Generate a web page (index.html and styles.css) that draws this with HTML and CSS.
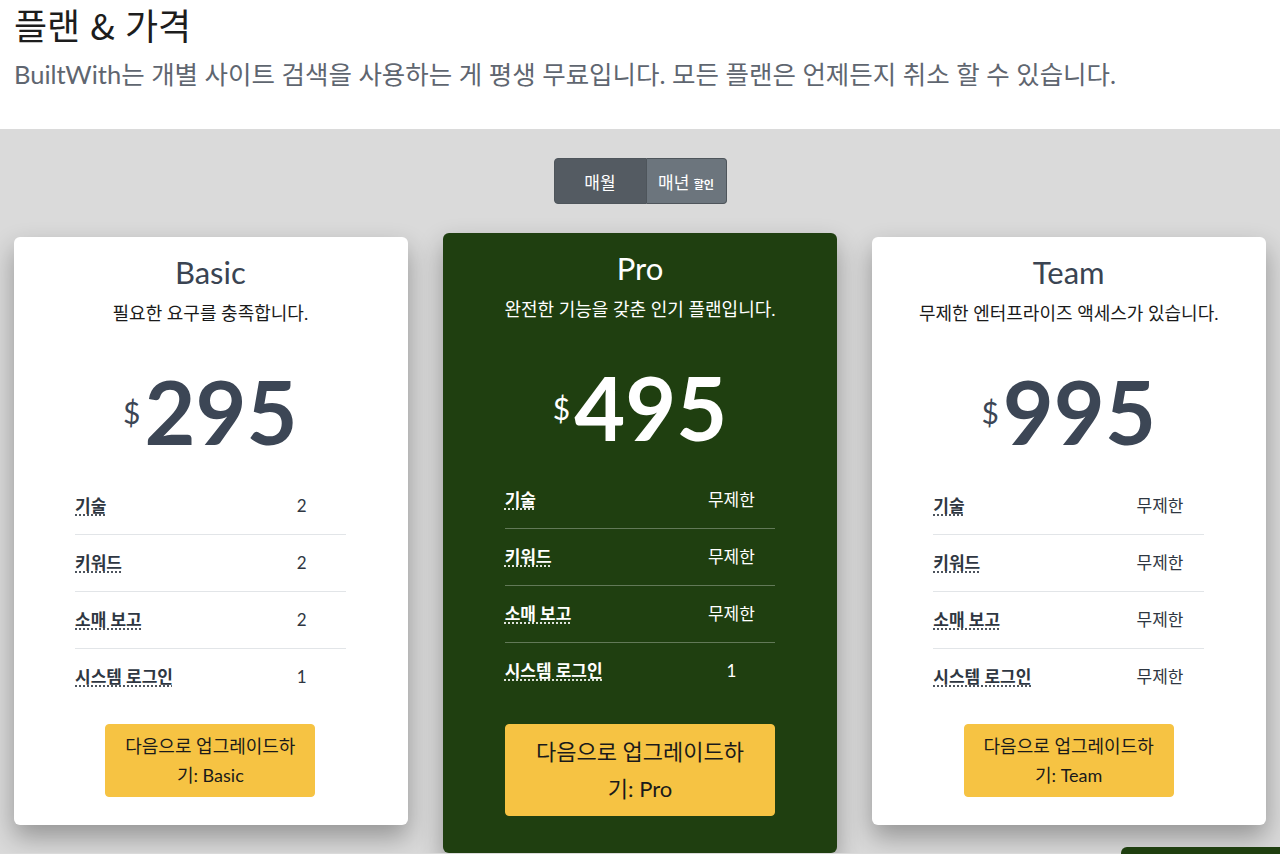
FILE: index.html
```html
<!DOCTYPE html>
<html lang="ko">
<head>
    <meta charset="UTF-8">
    <meta name="viewport" content="width=device-width, initial-scale=1.0">
    <title>플랜 &amp; 가격</title>
    <link rel="stylesheet" href="styles.css">
</head>
<body>

    <div class="page-header">
        <h1>플랜 &amp; 가격</h1>
        <p class="lead">BuiltWith는 개별 사이트 검색을 사용하는 게 평생 무료입니다. 모든 플랜은 언제든지 취소 할 수 있습니다.</p>
    </div>

    <div class="pricing">
        <div class="billing-toggle">
            <button class="toggle-btn active">매월</button>
            <button class="toggle-btn">매년 <small>할인</small></button>
        </div>

        <div class="plans">
            <!-- Basic -->
            <div class="plan-card">
                <h2 class="plan-name">Basic</h2>
                <p class="plan-desc">필요한 요구를 충족합니다.</p>
                <div class="plan-price"><span class="currency">$</span>295</div>
                <ul class="feature-list">
                    <li><abbr>기술</abbr><span>2</span></li>
                    <li><abbr>키워드</abbr><span>2</span></li>
                    <li><abbr>소매 보고</abbr><span>2</span></li>
                    <li><abbr>시스템 로그인</abbr><span>1</span></li>
                </ul>
                <button class="upgrade-btn">다음으로 업그레이드하<br>기: Basic</button>
            </div>

            <!-- Pro -->
            <div class="plan-card featured">
                <h2 class="plan-name">Pro</h2>
                <p class="plan-desc">완전한 기능을 갖춘 인기 플랜입니다.</p>
                <div class="plan-price"><span class="currency">$</span>495</div>
                <ul class="feature-list">
                    <li><abbr>기술</abbr><span>무제한</span></li>
                    <li><abbr>키워드</abbr><span>무제한</span></li>
                    <li><abbr>소매 보고</abbr><span>무제한</span></li>
                    <li><abbr>시스템 로그인</abbr><span>1</span></li>
                </ul>
                <button class="upgrade-btn">다음으로 업그레이드하<br>기: Pro</button>
            </div>

            <!-- Team -->
            <div class="plan-card">
                <h2 class="plan-name">Team</h2>
                <p class="plan-desc">무제한 엔터프라이즈 액세스가 있습니다.</p>
                <div class="plan-price"><span class="currency">$</span>995</div>
                <ul class="feature-list">
                    <li><abbr>기술</abbr><span>무제한</span></li>
                    <li><abbr>키워드</abbr><span>무제한</span></li>
                    <li><abbr>소매 보고</abbr><span>무제한</span></li>
                    <li><abbr>시스템 로그인</abbr><span>무제한</span></li>
                </ul>
                <button class="upgrade-btn">다음으로 업그레이드하<br>기: Team</button>
            </div>
        </div>
    </div>

    <div class="chat-tab"></div>

</body>
</html>
```

FILE: styles.css
```css
body {
    font-family: 'Lato', 'Noto Sans CJK KR', sans-serif;
    margin: 0;
    background-color: #dadada;
    color: #212529;
    overflow: hidden;
}

.page-header {
    background-color: #fff;
    height: 129px;
    padding: 0 14px;
    box-sizing: border-box;
}

.page-header h1 {
    font-family: 'Noto Sans CJK KR', sans-serif;
    font-size: 36px;
    font-weight: 400;
    line-height: 48px;
    margin: 0;
    color: #1d1d1d;
}

.lead {
    font-size: 25.5px;
    line-height: 34px;
    margin: 9px 0 0;
    color: #5f6670;
}

.pricing {
    padding-top: 29px;
}

/* Monthly / yearly switch */
.billing-toggle {
    display: flex;
    justify-content: center;
}

.toggle-btn {
    font-family: inherit;
    font-size: 17px;
    color: #fff;
    height: 46px;
    border: 1px solid #4e555b;
    background-color: #6c757d;
    cursor: pointer;
    padding: 0;
}

.toggle-btn:first-child {
    width: 93px;
    border-radius: 4px 0 0 4px;
}

.toggle-btn:last-child {
    width: 80px;
    border-left: none;
    border-radius: 0 4px 4px 0;
}

.toggle-btn.active {
    background-color: #545b62;
}

.toggle-btn small {
    font-size: 11px;
    font-weight: bold;
}

/* Cards */
.plans {
    display: flex;
    align-items: flex-start;
    gap: 35px;
    padding: 0 14px;
    margin-top: 33px;
}

.plan-card {
    flex: 1;
    background-color: #fff;
    border-radius: 6px;
    padding: 17px 62px 28px 61px;
    text-align: center;
    box-shadow: 0 12px 26px rgba(0, 0, 0, 0.32);
}

.plan-card.featured {
    margin-top: -4px;
    padding: 17px 62px 37px 62px;
    background-color: #1f3f10;
    color: #fff;
}

.plan-name {
    font-size: 31px;
    font-weight: 400;
    line-height: 36px;
    margin: 0;
    color: #3a4452;
}

.plan-desc {
    font-size: 18px;
    line-height: 26px;
    margin: 10px -30px 0;
    color: #1a1a1a;
}

.plan-price {
    font-size: 88px;
    line-height: 1;
    margin-top: 41px;
    color: #3c4655;
    font-weight: 700;
}

.currency {
    font-size: 30px;
    font-weight: 400;
    vertical-align: top;
    position: relative;
    top: 30px;
    margin-right: 4px;
}

.featured .plan-name,
.featured .plan-desc,
.featured .plan-price {
    color: #fff;
}

.feature-list {
    list-style: none;
    margin: 23px 0 0;
    padding: 0;
}

.featured .feature-list {
    margin-top: 21px;
}

.feature-list li {
    display: grid;
    grid-template-columns: 1fr 88px;
    padding: 15px 0;
    line-height: 26px;
    font-size: 17px;
    border-bottom: 1px solid #e2e5e8;
}

.feature-list li:last-child {
    border-bottom: none;
}

.featured .feature-list li {
    border-bottom-color: rgba(255, 255, 255, 0.3);
}

.featured .feature-list li:last-child {
    border-bottom: none;
}

.feature-list abbr {
    text-align: left;
    font-weight: bold;
    color: #2f3742;
    text-decoration: underline dotted;
    text-underline-offset: 3px;
}

.featured .feature-list abbr {
    color: #fff;
}

.feature-list span {
    text-align: center;
    color: #2f3742;
}

.featured .feature-list span {
    color: #fff;
}

.upgrade-btn {
    display: block;
    margin: 19px auto 0;
    width: 210px;
    padding: 6.5px 10px;
    font-family: inherit;
    font-size: 18px;
    line-height: 29px;
    color: #1a1a1a;
    background-color: #f6c343;
    border: 1px solid #f6c343;
    border-radius: 4px;
    cursor: pointer;
}

.featured .upgrade-btn {
    width: 270px;
    margin-top: 25px;
    font-size: 22px;
    line-height: 37px;
    padding: 8px 10px;
}

/* green tab peeking at the bottom right */
.chat-tab {
    position: fixed;
    right: 0;
    bottom: -40px;
    width: 159px;
    height: 47px;
    background-color: #1f3f10;
    border-radius: 6px 0 0 0;
}
```
